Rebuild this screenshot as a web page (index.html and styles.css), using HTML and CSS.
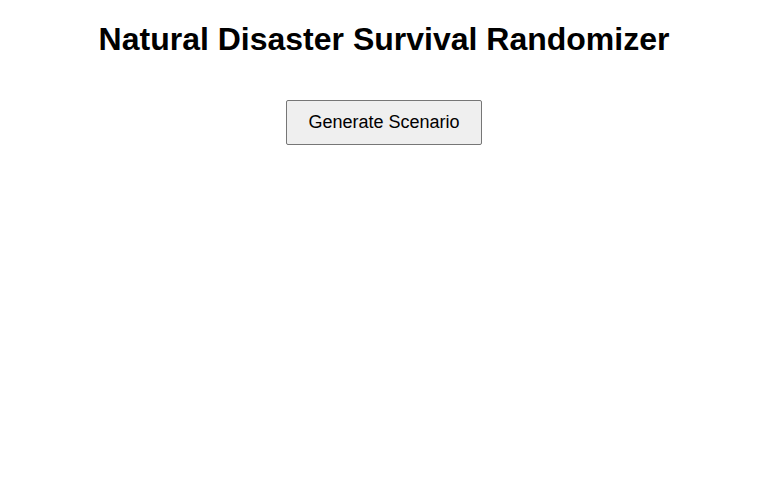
FILE: index.html
```html
<!DOCTYPE html>
<html>
<head>
<meta charset="utf-8">
<title>Natural Disaster Survival Randomizer</title>
<link rel="stylesheet" href="styles.css">
</head>
<body>
<h1>Natural Disaster Survival Randomizer</h1>
<div class="controls">
  <button id="generate">Generate Scenario</button>
</div>
<div id="scenario"></div>
</body>
</html>
```

FILE: styles.css
```css
body { margin: 0; padding: 0 8px; font-family: "Liberation Sans", Arial, sans-serif; text-align: center; background: #fff; color: #000; }
h1 { font-size: 32px; margin: 21px 0 0; }
.controls { margin-top: 42px; }
button { font-family: "Liberation Sans", Arial, sans-serif; font-size: 18px; padding: 11px 21px; background: #efefef; border: 1px solid #767676; border-radius: 2px; color: #000; }
```
